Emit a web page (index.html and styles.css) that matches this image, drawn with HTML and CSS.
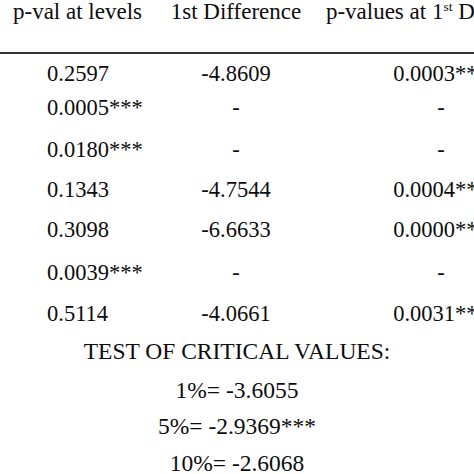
FILE: index.html
```html
<!DOCTYPE html>
<html>
<head>
<meta charset="utf-8">
<link rel="stylesheet" href="styles.css">
</head>
<body>
<div class="page">
  <div class="table">
    <div class="row head">
      <div class="c1">p-val at levels</div>
      <div class="c2">1st Difference</div>
      <div class="c3">p-values at 1<sup>st</sup> Difference</div>
    </div>
    <div class="body">
      <div class="row"><div class="c1 num">0.2597</div><div class="c2">-4.8609</div><div class="c3">0.0003***</div></div>
      <div class="row"><div class="c1 num">0.0005***</div><div class="c2">-</div><div class="c3">-</div></div>
      <div class="row"><div class="c1 num">0.0180***</div><div class="c2">-</div><div class="c3">-</div></div>
      <div class="row"><div class="c1 num">0.1343</div><div class="c2">-4.7544</div><div class="c3">0.0004***</div></div>
      <div class="row"><div class="c1 num">0.3098</div><div class="c2">-6.6633</div><div class="c3">0.0000***</div></div>
      <div class="row"><div class="c1 num">0.0039***</div><div class="c2">-</div><div class="c3">-</div></div>
      <div class="row"><div class="c1 num">0.5114</div><div class="c2">-4.0661</div><div class="c3">0.0031***</div></div>
    </div>
  </div>
  <div class="crit">
    <div class="crow">TEST OF CRITICAL VALUES:</div>
    <div class="crow">1%= -3.6055</div>
    <div class="crow">5%= -2.9369***</div>
    <div class="crow">10%= -2.6068</div>
  </div>
</div>
</body>
</html>
```

FILE: styles.css
```css
html, body {
  margin: 0;
  padding: 0;
  background: #fff;
  overflow: hidden;
}
.page {
  width: 474px;
  height: 474px;
  overflow: hidden;
  font-family: "Liberation Serif", "Times New Roman", serif;
  font-size: 22.5px;
  line-height: 22px;
  color: #0d0d0d;
}
.table {
  width: 565px;
}
.row {
  display: grid;
  grid-template-columns: 155px 162px 248px;
  white-space: nowrap;
}
.row > div {
  text-align: center;
}
.row > .num {
  text-align: left;
  padding-left: 47px;
}
.head {
  height: 52px;
  font-size: 23px;
  line-height: 24px;
  border-bottom: 2px solid #333;
}
.head sup {
  font-size: 13.5px;
  line-height: 0;
  vertical-align: 8px;
}
.body {
  padding-top: 9px;
}
.body .row:nth-child(1) { height: 34px; }
.body .row:nth-child(2) { height: 42px; }
.body .row:nth-child(3) { height: 40px; }
.body .row:nth-child(4) { height: 40px; }
.body .row:nth-child(5) { height: 43px; }
.body .row:nth-child(6) { height: 41px; }
.body .row:nth-child(7) { height: 37px; }
.crit {
  width: 474px;
  text-align: center;
  font-size: 23.5px;
}
.crow:nth-child(1) { height: 39px; }
.crow:nth-child(2) { height: 36px; }
.crow:nth-child(3) { height: 37px; }
.crow:nth-child(4) { height: 22px; }
```
